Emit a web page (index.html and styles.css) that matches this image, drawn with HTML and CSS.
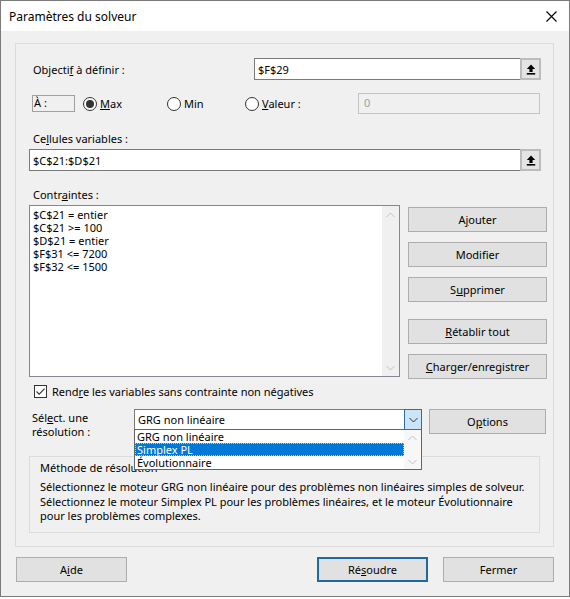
FILE: index.html
```html
<!DOCTYPE html>
<html lang="fr">
<head>
<meta charset="utf-8">
<title>Paramètres du solveur</title>
<link rel="stylesheet" href="styles.css">
</head>
<body>
<div class="window">
  <div class="titlebar">
    <span class="title">Paramètres du solveur</span>
    <svg class="close" width="11" height="11" viewBox="0 0 11 11"><path d="M0.5 0.5 L10.5 10.5 M10.5 0.5 L0.5 10.5" stroke="#000" stroke-width="1.1" fill="none"/></svg>
  </div>
  <div class="client">
    <div class="panel">
      <div class="row-obj">
        <span class="lbl-obj">Objecti<u>f</u> à définir :</span>
        <div class="refedit ref-obj">
          <span class="val">$F$29</span>
          <span class="refbtn"><svg width="10" height="11" viewBox="0 0 10 11"><path d="M5 0.5 L0.8 5 H3.4 V8 H6.6 V5 H9.2 Z" fill="#000"/><rect x="0.8" y="9" width="8.4" height="1.6" fill="#000"/></svg></span>
        </div>
      </div>
      <div class="row-to">
        <span class="to-box">À :</span>
        <span class="radio-opt opt-max"><span class="radio checked"></span><span><u>M</u>ax</span></span>
        <span class="radio-opt opt-min"><span class="radio"></span><span>Min</span></span>
        <span class="radio-opt opt-val"><span class="radio"></span><span><u>V</u>aleur :</span></span>
        <span class="value-box">0</span>
      </div>
      <div class="lbl-block lbl-cells">Ce<u>l</u>lules variables :</div>
      <div class="refedit ref-cells">
        <span class="val">$C$21:$D$21</span>
        <span class="refbtn"><svg width="10" height="11" viewBox="0 0 10 11"><path d="M5 0.5 L0.8 5 H3.4 V8 H6.6 V5 H9.2 Z" fill="#000"/><rect x="0.8" y="9" width="8.4" height="1.6" fill="#000"/></svg></span>
      </div>
      <div class="lbl-block lbl-cons">Contr<u>a</u>intes :</div>
      <div class="constraints">
        <div class="listbox">
          <div class="items">
            <div>$C$21 = entier</div>
            <div>$C$21 &gt;= 100</div>
            <div>$D$21 = entier</div>
            <div>$F$31 &lt;= 7200</div>
            <div>$F$32 &lt;= 1500</div>
          </div>
          <div class="vscroll">
            <span class="sbtn"><svg width="9" height="6" viewBox="0 0 9 6"><path d="M0.5 5 L4.5 1 L8.5 5" stroke="#c2c2c2" fill="none" stroke-width="1"/></svg></span>
            <span class="sbtn"><svg width="9" height="6" viewBox="0 0 9 6"><path d="M0.5 1 L4.5 5 L8.5 1" stroke="#c2c2c2" fill="none" stroke-width="1"/></svg></span>
          </div>
        </div>
        <div class="side-btns">
          <span class="btn">A<u>j</u>outer</span>
          <span class="btn">Modifier</span>
          <span class="btn">S<u>u</u>pprimer</span>
          <span class="btn btn-gap"><u>R</u>établir tout</span>
          <span class="btn"><u>C</u>harger/enregistrer</span>
        </div>
      </div>
      <div class="check-row">
        <span class="checkbox"><svg width="11" height="11" viewBox="0 0 11 11"><path d="M1.5 5.5 L4.2 8.2 L9.6 2.6" stroke="#333" stroke-width="1.1" fill="none"/></svg></span>
        <span>Rend<u>r</u>e les variables sans contrainte non négatives</span>
      </div>
      <div class="engine-row">
        <div class="engine-label">Sél<u>e</u>ct. une<br>résolution :</div>
        <div class="combo">
          <span class="combo-text">GRG non linéaire</span>
          <span class="dropbtn"><svg width="9" height="6" viewBox="0 0 9 6"><path d="M0.5 1 L4.5 5 L8.5 1" stroke="#333" fill="none" stroke-width="1"/></svg></span>
          <div class="droplist">
            <div class="dl-items">
              <div class="dl-item">GRG non linéaire</div>
              <div class="dl-item selected">Simplex PL</div>
              <div class="dl-item">Évolutionnaire</div>
            </div>
            <div class="dl-scroll">
              <svg width="9" height="6" viewBox="0 0 9 6"><path d="M0.5 5 L4.5 1 L8.5 5" stroke="#c2c2c2" fill="none" stroke-width="1"/></svg>
              <svg width="9" height="6" viewBox="0 0 9 6"><path d="M0.5 1 L4.5 5 L8.5 1" stroke="#c2c2c2" fill="none" stroke-width="1"/></svg>
            </div>
          </div>
        </div>
        <span class="btn btn-options">O<u>p</u>tions</span>
      </div>
      <div class="method">
        <div class="method-title">Méthode de résolution</div>
        <div class="method-desc">Sélectionnez le moteur GRG non linéaire pour des problèmes non linéaires simples de solveur.<br>Sélectionnez le moteur Simplex PL pour les problèmes linéaires, et le moteur Évolutionnaire<br>pour les problèmes complexes.</div>
      </div>
    </div>
    <div class="footer">
      <span class="btn btn-foot">A<u>i</u>de</span>
      <span class="spacer"></span>
      <span class="btn btn-foot btn-default">Ré<u>s</u>oudre</span>
      <span class="btn btn-foot">Fermer</span>
    </div>
  </div>
  <svg class="cursor" width="13" height="20" viewBox="0 0 13 20"><path d="M0.5 0.5 L0.5 16 L4.2 12.4 L6.8 18.6 L9 17.6 L6.4 11.6 L11.4 11.6 Z" fill="#fff" stroke="#000" stroke-width="1" stroke-linejoin="miter"/></svg>
</div>
</body>
</html>
```
FILE: styles.css
```css
html, body {
  margin: 0;
  padding: 0;
  background: #ffffff;
}
body {
  font-family: "Noto Sans", "Open Sans", "DejaVu Sans", sans-serif;
  font-size: 11px;
  color: #000;
}
u {
  text-decoration: underline;
  text-underline-offset: 1px;
}
.window {
  position: relative;
  width: 570px;
  height: 597px;
  box-sizing: border-box;
  border: 1px solid #7a7a7a;
  background: #f0f0f0;
  display: flex;
  flex-direction: column;
}
.titlebar {
  height: 30px;
  flex: none;
  background: #ffffff;
  display: flex;
  align-items: center;
  justify-content: space-between;
  padding: 0 12px 0 8px;
}
.title {
  font-size: 12px;
}
.close {
  display: block;
}
.client {
  flex: 1;
  padding: 12px 15px 0 14px;
}
.panel {
  width: 539px;
  height: 504px;
  box-sizing: border-box;
  border: 1px solid #dcdcdc;
  padding: 14px 6px 0 13px;
}
.row-obj {
  display: flex;
  align-items: center;
  height: 22px;
}
.lbl-obj {
  width: 221px;
  padding-left: 4px;
}
.refedit {
  box-sizing: border-box;
  height: 22px;
  border: 1px solid #7a7a7a;
  background: #ffffff;
  display: flex;
  align-items: center;
}
.ref-obj { width: 287px; }
.ref-cells { width: 512px; margin-top: 3px; }
.refedit .val {
  flex: 1;
  padding-left: 3px;
}
.refbtn {
  box-sizing: border-box;
  width: 21px;
  height: 22px;
  margin: -1px -1px -1px 0;
  border: 2px solid #bcbcbc;
  background: #e4e4e4;
  display: flex;
  align-items: center;
  justify-content: center;
}
.refbtn svg { display: block; }
.row-to {
  margin-top: 13px;
  display: flex;
  align-items: center;
  height: 21px;
}
.to-box {
  margin-left: 3px;
  width: 43px;
  height: 17px;
  box-sizing: border-box;
  border: 1px solid #a0a0a0;
  padding-left: 1px;
  line-height: 13px;
}
.radio-opt {
  display: flex;
  align-items: center;
  gap: 3px;
}
.opt-max { margin-left: 8px; width: 84px; }
.opt-min { width: 78px; }
.opt-val { width: 113px; }
.radio {
  width: 14px;
  height: 14px;
  box-sizing: border-box;
  border: 1px solid #333;
  border-radius: 50%;
  background: #fff;
  display: flex;
  align-items: center;
  justify-content: center;
}
.radio.checked::after {
  content: "";
  width: 8px;
  height: 8px;
  border-radius: 50%;
  background: #333;
}
.value-box {
  width: 182px;
  height: 21px;
  box-sizing: border-box;
  border: 1px solid #c4c4c4;
  background: #f0f0f0;
  color: #a0a0a0;
  padding-left: 5px;
  line-height: 18px;
}
.lbl-block {
  padding-left: 4px;
  line-height: 15px;
}
.lbl-cells { margin-top: 17px; }
.lbl-cons { margin-top: 16px; }
.constraints {
  margin-top: 3px;
  display: flex;
  gap: 8px;
  height: 174px;
}
.listbox {
  width: 371px;
  height: 172px;
  box-sizing: border-box;
  border: 1px solid #828790;
  background: #ffffff;
  display: flex;
}
.items {
  flex: 1;
  padding: 2px 0 0 3px;
  line-height: 13px;
}
.vscroll {
  width: 17px;
  background: #f0f0f0;
  display: flex;
  flex-direction: column;
  justify-content: space-between;
}
.sbtn {
  height: 17px;
  display: flex;
  align-items: center;
  justify-content: center;
}
.sbtn svg { display: block; }
.side-btns {
  width: 139px;
  padding-top: 2px;
  display: flex;
  flex-direction: column;
}
.btn {
  box-sizing: border-box;
  height: 25px;
  border: 1px solid #adadad;
  background: #e1e1e1;
  display: flex;
  align-items: center;
  justify-content: center;
}
.side-btns .btn + .btn { margin-top: 10px; }
.side-btns .btn.btn-gap { margin-top: 17px; }
.check-row {
  margin-top: 6px;
  height: 13px;
  display: flex;
  align-items: center;
  gap: 5px;
  padding-left: 5px;
}
.checkbox {
  width: 13px;
  height: 13px;
  box-sizing: border-box;
  border: 1px solid #333;
  background: #fff;
  display: flex;
  align-items: center;
  justify-content: center;
}
.checkbox svg { display: block; }
.engine-row {
  margin-top: 11px;
  height: 25px;
  display: flex;
  align-items: flex-start;
  position: relative;
  z-index: 2;
}
.engine-label {
  width: 102px;
  padding-left: 3px;
  padding-top: 2px;
  line-height: 14px;
}
.combo {
  position: relative;
  width: 288px;
  height: 21px;
  box-sizing: border-box;
  border: 1px solid #7a7a7a;
  background: #ffffff;
  display: flex;
}
.combo-text {
  flex: 1;
  padding-left: 3px;
  line-height: 19px;
}
.dropbtn {
  box-sizing: border-box;
  width: 18px;
  height: 21px;
  margin: -1px -1px -1px 0;
  border: 1px solid #2f6da3;
  background: #cce4f7;
  display: flex;
  align-items: center;
  justify-content: center;
}
.dropbtn svg { display: block; }
.droplist {
  position: absolute;
  left: -1px;
  top: 19px;
  width: 288px;
  height: 41px;
  box-sizing: border-box;
  border: 1px solid #646464;
  background: #ffffff;
  display: flex;
}
.dl-items {
  flex: 1;
}
.dl-item {
  height: 13px;
  line-height: 13px;
  padding-left: 2px;
  box-sizing: border-box;
}
.dl-item.selected {
  background: #0078d7;
  color: #ffffff;
  outline: 1px dotted #d8c88a;
  outline-offset: -1px;
}
.dl-scroll {
  width: 17px;
  background: #f7f7f7;
  display: flex;
  flex-direction: column;
  justify-content: space-between;
  align-items: center;
  padding: 5px 0 4px;
  box-sizing: border-box;
}
.dl-scroll svg { display: block; }
.btn-options {
  margin-left: 7px;
  width: 117px;
}
.method {
  margin-top: 22px;
  width: 511px;
  height: 77px;
  box-sizing: border-box;
  border: 1px solid #dcdcdc;
  padding: 3px 8px 0 10px;
}
.method-title {
  line-height: 15px;
}
.method-desc {
  margin-top: 5px;
  line-height: 14.5px;
}
.footer {
  margin-top: 10px;
  padding-left: 1px;
  display: flex;
}
.btn-foot {
  width: 111px;
}
.spacer { flex: 1; }
.btn-default {
  border: 2px solid #1c69a8;
  margin-right: 15px;
}
.cursor {
  position: absolute;
  left: 363px;
  top: 448px;
}
```
